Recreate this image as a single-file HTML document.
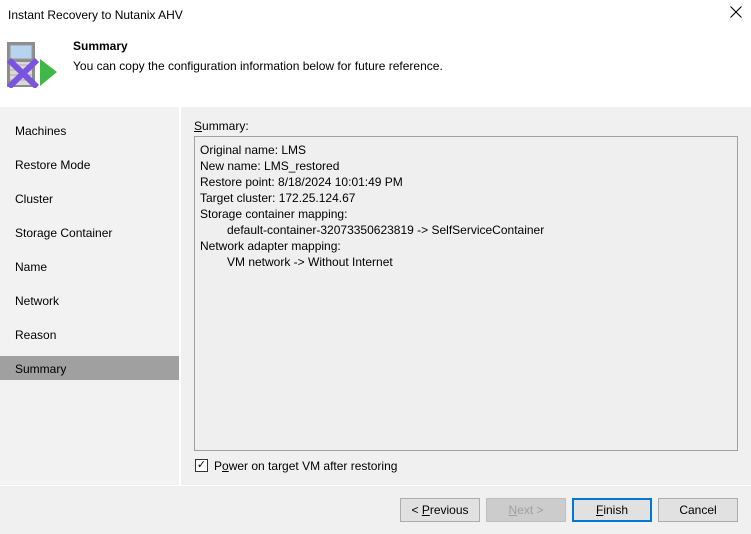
<!DOCTYPE html>
<html><head><style>
*{margin:0;padding:0;box-sizing:border-box}
body{width:751px;height:534px;background:#f0f0f0;font-family:"Liberation Sans",sans-serif;font-size:12px;color:#000;position:relative;overflow:hidden}
.abs{position:absolute}
.t{white-space:nowrap}
.btn{position:absolute;top:498px;width:80px;height:24px;border:1px solid #adadad;background:#e1e1e1;text-align:center;line-height:22px;font-size:12px}
.nav{position:absolute;left:15px;font-size:12px}
</style></head><body>
<div class="abs" style="left:0;top:0;width:751px;height:107px;background:#fff"></div>
<div class="abs t" style="left:8px;top:8px;font-size:12px">Instant Recovery to Nutanix AHV</div>
<svg class="abs" style="left:730px;top:6px" width="12" height="12" viewBox="0 0 12 12"><path d="M0.5 0.5L11.5 11.5M11.5 0.5L0.5 11.5" stroke="#000" stroke-width="1.1"/></svg>
<svg class="abs" style="left:7px;top:42px" width="52" height="46" viewBox="0 0 52 46">
<rect x="0" y="0" width="28" height="45" fill="#8c8c8c"/>
<rect x="3" y="3" width="22" height="14" fill="#b7d3ee" stroke="#999"/>
<rect x="3" y="20" width="22" height="23" fill="#d9d9d9"/>
<path d="M3 23h22M3 28h22M3 33h22M3 38h22" stroke="#aaa" stroke-width="1"/>
<path d="M2 18 L30 45 M30 18 L2 45" stroke="#7a53e0" stroke-width="6"/>
<path d="M33 17 L50 30 L33 44 Z" fill="#41b649"/>
</svg>
<div class="abs t" style="left:73px;top:39px;font-weight:bold">Summary</div>
<div class="abs t" style="left:73px;top:59px">You can copy the configuration information below for future reference.</div>
<div class="abs" style="left:0;top:107px;width:179px;height:378px;background:#f2f2f2"></div>
<div class="abs" style="left:179px;top:107px;width:2px;height:378px;background:#fff"></div>
<div class="nav" style="top:124px">Machines</div>
<div class="nav" style="top:158px">Restore Mode</div>
<div class="nav" style="top:192px">Cluster</div>
<div class="nav" style="top:226px">Storage Container</div>
<div class="nav" style="top:260px">Name</div>
<div class="nav" style="top:294px">Network</div>
<div class="nav" style="top:328px">Reason</div>
<div class="abs" style="left:0;top:356px;width:179px;height:24px;background:#a0a0a0"></div>
<div class="nav" style="top:362px">Summary</div>
<div class="abs t" style="left:194px;top:119px"><u>S</u>ummary:</div>
<div class="abs" style="left:194px;top:136px;width:544px;height:315px;border:1px solid #a0a0a0;background:#efefef;padding:5px 0 0 5px;line-height:16px">
<div>Original name: LMS</div><div>New name: LMS_restored</div><div>Restore point: 8/18/2024 10:01:49 PM</div><div>Target cluster: 172.25.124.67</div><div>Storage container mapping:</div><div style="padding-left:27px">default-container-32073350623819 -&gt; SelfServiceContainer</div><div>Network adapter mapping:</div><div style="padding-left:27px">VM network -&gt; Without Internet</div>
</div>
<div class="abs" style="left:195px;top:459px;width:13px;height:13px;border:1px solid #333;background:#fff;font-size:11px;line-height:11px;text-align:center">✓</div>
<div class="abs t" style="left:214px;top:459px">P<u>o</u>wer on target VM after restoring</div>
<div class="abs" style="left:0;top:485px;width:751px;height:1px;background:#fff"></div>
<div class="btn" style="left:400px">&lt; <u>P</u>revious</div>
<div class="btn" style="left:486px;color:#a0a0a0;border-color:#bfbfbf;background:#ccc"><u>N</u>ext &gt;</div>
<div class="btn" style="left:572px;border:2px solid #0078d7;line-height:20px"><u>F</u>inish</div>
<div class="btn" style="left:658px">Cancel</div>
</body></html>
